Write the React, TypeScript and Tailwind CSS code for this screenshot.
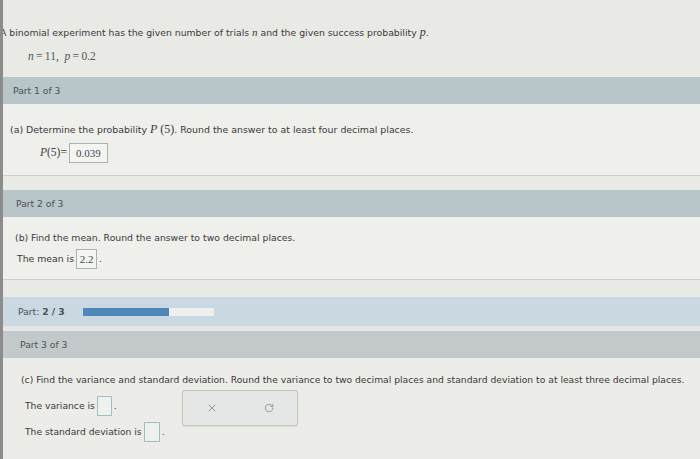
import { X, RotateCcw } from "lucide-react"

const sans = { fontFamily: '"DejaVu Sans", Verdana, sans-serif' }
const serif = { fontFamily: '"Liberation Serif", "Times New Roman", serif' }

function Header({ label, pl, bg = "bg-[#b8c5c9]" }: { label: string; pl: string; bg?: string }) {
  return (
    <div className={`h-[27px] flex items-center ${pl} ${bg} text-[9.2px] text-[#4a5257]`}>
      {label}
    </div>
  )
}

function AnswerBox({ value, w }: { value?: string; w: string }) {
  return (
    <span
      className={`inline-flex items-center justify-center h-[20px] ${w} border border-[#a9b2b3] bg-[#f4f4f0] text-[11px] text-[#3b4a55] mx-[2px]`}
      style={serif}
    >
      {value}
    </span>
  )
}

export default function App() {
  return (
    <div
      className="w-[700px] h-[459px] overflow-hidden bg-[#e9e9e5] border-l-[3px] border-[#8c8c8a] text-[#3a3a3a] flex flex-col"
      style={sans}
    >
      {/* intro */}
      <div className="h-[77px] flex flex-col">
        <div className="pt-[23px] text-[9.3px] -ml-[3px]">
          A binomial experiment has the given number of trials{" "}
          <span className="italic text-[11px]" style={serif}>n</span> and the given success probability{" "}
          <span className="italic text-[12px]" style={serif}>p</span>.
        </div>
        <div className="pt-[7px] pl-[25px] text-[11.5px] text-[#555]" style={serif}>
          <i>n</i>{"\u2009=\u2009"}11,{"\u2002"}<i>p</i>{"\u2009=\u2009"}0.2
        </div>
      </div>

      <Header label="Part 1 of 3" pl="pl-[10px]" />
      <div className="h-[72px] bg-[#efefeb] border-b border-[#cfd0cc] flex flex-col">
        <div className="pt-[16px] pl-[7px] text-[9.4px]">
          (a) Determine the probability{" "}
          <span className="italic text-[12px]" style={serif}>P</span>
          <span className="text-[12px]" style={serif}> (5)</span>. Round the answer to at least four decimal places.
        </div>
        <div className="pt-[5px] pl-[37px] flex items-center text-[11.5px] text-[#444]" style={serif}>
          <i>P</i>(5)=
          <AnswerBox value="0.039" w="w-[39px]" />
        </div>
      </div>

      <div className="h-[14px]" />

      <Header label="Part 2 of 3" pl="pl-[13px]" />
      <div className="h-[63px] bg-[#efefeb] border-b border-[#cfd0cc] flex flex-col">
        <div className="pt-[14px] pl-[12px] text-[9.3px]">
          (b) Find the mean. Round the answer to two decimal places.
        </div>
        <div className="pt-[4px] pl-[14px] flex items-center text-[9.3px]">
          The mean is
          <AnswerBox value="2.2" w="w-[21px]" />.
        </div>
      </div>

      <div className="h-[17px]" />

      <div className="h-[29px] bg-[#c9d8e1] flex items-center pl-[15px] text-[9.2px] text-[#4a5257] gap-[18px]">
        <span>
          Part: <b>2 / 3</b>
        </span>
        <div className="w-[131px] h-[8px] bg-[#eef0ef] flex">
          <div className="w-[86px] h-full bg-[#4f87b8]" />
        </div>
      </div>

      <div className="h-[5px] bg-[#e4e6e4]" />

      <Header label="Part 3 of 3" pl="pl-[17px]" bg="bg-[#c3c9ca]" />
      <div className="flex-1 bg-[#ecece8] flex flex-col">
        <div className="pt-[15px] pl-[18px] text-[9.2px] whitespace-nowrap">
          (c) Find the variance and standard deviation. Round the variance to two decimal places and standard
          deviation to at least three decimal places.
        </div>
        <div className="flex pl-[22px] pt-[9px]">
          <div className="w-[157px] flex flex-col text-[9.2px]">
            <div className="flex items-center h-[20px]">
              The variance is
              <span className="inline-block w-[15px] h-[20px] border border-[#9fc0c0] bg-[#eef1ee] mx-[2px]" />
              .
            </div>
            <div className="flex items-center h-[20px] mt-[6px]">
              The standard deviation is
              <span className="inline-block w-[16px] h-[20px] border border-[#9fc0c0] bg-[#eef1ee] mx-[2px]" />
              .
            </div>
          </div>
          <div className="-mt-[6px] w-[116px] h-[36px] border border-[#c3c7c6] rounded-[2px] bg-[#e4e7e6] shadow-[0_1px_1px_rgba(0,0,0,0.08)] flex items-center justify-center gap-[46px] text-[#7f909c]">
            <X size={12} strokeWidth={1.8} />
            <RotateCcw size={10} strokeWidth={2} className="-scale-x-100" />
          </div>
        </div>
      </div>
    </div>
  )
}
